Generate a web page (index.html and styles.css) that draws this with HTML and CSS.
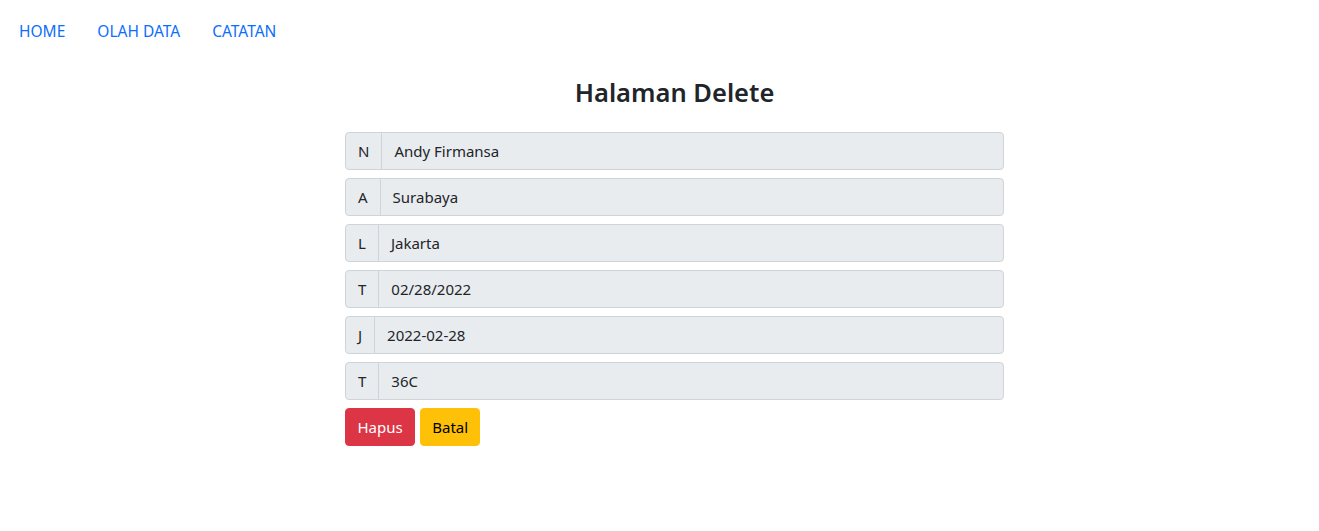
FILE: index.html
```html
<!DOCTYPE html>
<html lang="id">
<head>
<meta charset="utf-8">
<title>Halaman Delete</title>
<link rel="stylesheet" href="styles.css">
</head>
<body>
<nav class="nav">
  <a class="nav-link" href="#">HOME</a>
  <a class="nav-link" href="#">OLAH DATA</a>
  <a class="nav-link" href="#">CATATAN</a>
</nav>
<main class="content">
  <h3 class="title">Halaman Delete</h3>
  <form class="form">
    <div class="input-group"><span class="addon">N</span><span class="field">Andy Firmansa</span></div>
    <div class="input-group"><span class="addon">A</span><span class="field">Surabaya</span></div>
    <div class="input-group"><span class="addon">L</span><span class="field">Jakarta</span></div>
    <div class="input-group"><span class="addon">T</span><span class="field">02/28/2022</span></div>
    <div class="input-group"><span class="addon">J</span><span class="field">2022-02-28</span></div>
    <div class="input-group"><span class="addon">T</span><span class="field">36C</span></div>
    <div class="actions">
      <button type="button" class="btn btn-danger">Hapus</button>
      <button type="button" class="btn btn-warning">Batal</button>
    </div>
  </form>
</main>
</body>
</html>
```

FILE: styles.css
```css
* { box-sizing: border-box; }
html, body { margin: 0; padding: 0; background: #fff; }
body {
  font-family: "Noto Sans", "Open Sans", sans-serif;
  font-size: 16px;
  line-height: 1.5;
  color: #212529;
}
.nav {
  display: flex;
  padding: 19px 0 0 3px;
}
.nav-link {
  display: block;
  padding: 0 16px;
  color: #0d6efd;
  text-decoration: none;
  font-size: 15.5px;
  line-height: 24px;
}
.content {
  width: 659px;
  margin-left: 345px;
}
.title {
  margin: 31px 0 22px;
  text-align: center;
  font-size: 25.5px;
  font-weight: 600;
  line-height: 36px;
}
.form {
  display: flex;
  flex-direction: column;
  gap: 8px;
}
.input-group {
  display: flex;
  height: 38px;
  border: 1px solid #ced4da;
  border-radius: 4px;
  background: #e9ecef;
  font-size: 15px;
}
.addon {
  padding: 6px 12px;
  border-right: 1px solid #ced4da;
  line-height: 24px;
}
.field {
  flex: 1;
  padding: 6px 12px;
  line-height: 24px;
}
.actions {
  display: flex;
  gap: 5px;
}
.btn {
  height: 38px;
  padding: 6px 12px;
  border: 1px solid transparent;
  border-radius: 4px;
  font-family: inherit;
  font-size: 15px;
  line-height: 24px;
  cursor: pointer;
}
.btn-danger { background: #dc3545; border-color: #dc3545; color: #fff; padding: 6px 11.5px; }
.btn-warning { background: #ffc107; border-color: #ffc107; color: #000; padding: 6px 11px; }
```
